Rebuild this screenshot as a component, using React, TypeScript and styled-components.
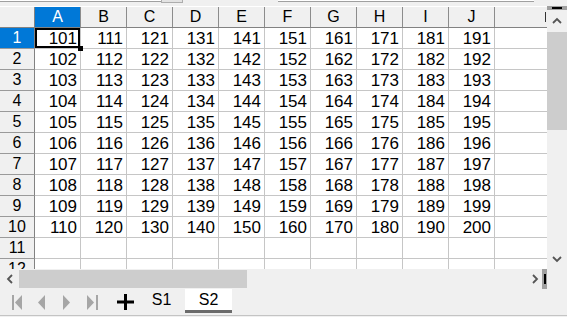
import React from "react";
import styled, { createGlobalStyle } from "styled-components";

const GlobalStyle = createGlobalStyle`
  html, body {
    margin: 0;
    padding: 0;
    background: #f0f0f0;
    font-family: "Liberation Sans", Arial, sans-serif;
    overflow: hidden;
  }
`;

const COLS = ["A", "B", "C", "D", "E", "F", "G", "H", "I", "J"];
const ROWS = Array.from({ length: 12 }, (_, i) => i + 1);

const Page = styled.div`
  width: 567px;
  height: 317px;
  display: flex;
  flex-direction: column;
  background: #f0f0f0;
`;

const TopStrip = styled.div`
  height: 6px;
  display: flex;
  align-items: flex-start;
`;

const TopInput = styled.div<{ $w: number }>`
  width: ${(p) => p.$w}px;
  height: 1px;
  background: #fff;
  border-bottom: 1px solid #a0a0a0;
`;

const TopButton = styled.div`
  width: 20px;
  height: 2px;
  background: #e3e3e3;
  border: 1px solid #adadad;
  border-top: none;
`;

const Gap = styled.div<{ $w: number }>`
  width: ${(p) => p.$w}px;
  flex-shrink: 0;
`;

const Main = styled.div`
  display: flex;
  height: 263px;
`;

const Sheet = styled.div`
  flex: 1;
  display: flex;
  flex-direction: column;
  overflow: hidden;
  padding-top: 1px;
  background: #fff;
`;

const HeaderRow = styled.div`
  display: flex;
  height: 20px;
  flex-shrink: 0;
  background: #f0f0f0;
  border-bottom: 1px solid #828282;
`;

const Corner = styled.div`
  width: 34px;
  border-right: 1px solid #828282;
  flex-shrink: 0;
`;

const ColHeader = styled.div<{ $selected?: boolean }>`
  width: 45px;
  flex-shrink: 0;
  border-right: 1px solid #8c8c8c;
  display: flex;
  align-items: center;
  justify-content: center;
  font-size: 16px;
  color: ${(p) => (p.$selected ? "#fff" : "#000")};
  background: ${(p) => (p.$selected ? "#0078d7" : "transparent")};
`;

const HeaderRest = styled.div`
  flex: 1;
  display: flex;
  justify-content: flex-end;
  align-items: center;
`;

const Splitter = styled.div`
  width: 1px;
  height: 10px;
  background: #333;
  margin-right: 1px;
`;

const Row = styled.div`
  display: flex;
  height: 20px;
  flex-shrink: 0;
  border-bottom: 1px solid #c6c6c6;
`;

const RowHeader = styled.div<{ $selected?: boolean }>`
  width: 34px;
  flex-shrink: 0;
  border-right: 1px solid #828282;
  margin-bottom: -1px;
  border-bottom: 1px solid #9a9a9a;
  display: flex;
  align-items: center;
  justify-content: center;
  font-size: 16px;
  color: ${(p) => (p.$selected ? "#fff" : "#000")};
  background: ${(p) => (p.$selected ? "#0078d7" : "#f0f0f0")};
`;

const Cell = styled.div<{ $active?: boolean }>`
  position: relative;
  width: 46px;
  flex-shrink: 0;
  box-sizing: border-box;
  border-right: 1px solid #c6c6c6;
  display: flex;
  align-items: center;
  justify-content: flex-end;
  padding-right: 3px;
  padding-top: 1px;
  font-size: 17px;
  color: #000;
  box-shadow: ${(p) => (p.$active ? "inset 0 0 0 2px #000" : "none")};
`;

const FillHandle = styled.div`
  position: absolute;
  right: -3px;
  bottom: -3px;
  width: 5px;
  height: 5px;
  background: #000;
  z-index: 2;
`;

const CellRest = styled.div`
  flex: 1;
`;

const VScroll = styled.div`
  width: 20px;
  flex-shrink: 0;
  display: flex;
  flex-direction: column;
  align-items: center;
  background: #f0f0f0;
`;

const VSplit = styled.div`
  width: 20px;
  height: 4px;
  background: #a0a0a0;
  display: flex;
  align-items: center;
  justify-content: center;
`;

const VSplitLine = styled.div`
  width: 10px;
  height: 2px;
  background: #000;
`;

const ArrowBox = styled.div<{ $w: number; $h: number }>`
  width: ${(p) => p.$w}px;
  height: ${(p) => p.$h}px;
  display: flex;
  align-items: center;
  justify-content: center;
  flex-shrink: 0;
`;

const VThumb = styled.div`
  width: 20px;
  height: 98px;
  background: #cdcdcd;
`;

const VTrack = styled.div`
  flex: 1;
`;

const HScroll = styled.div`
  height: 20px;
  display: flex;
  align-items: center;
`;

const HThumb = styled.div`
  width: 228px;
  height: 18px;
  background: #cdcdcd;
`;

const HTrack = styled.div`
  flex: 1;
`;

const HSplit = styled.div`
  width: 5px;
  height: 20px;
  background: #a0a0a0;
  display: flex;
  justify-content: center;
  align-items: center;
`;

const HSplitLine = styled.div`
  width: 2px;
  height: 10px;
  background: #000;
`;

const TabBar = styled.div`
  height: 26px;
  display: flex;
  align-items: stretch;
  border-bottom: 1px solid #c4c4c4;
`;

const NavGroup = styled.div`
  display: flex;
  align-items: center;
  padding-left: 12px;
`;

const NavButton = styled.div`
  width: 25px;
  height: 26px;
  display: flex;
  align-items: center;
  justify-content: flex-start;
`;

const AddButton = styled.div`
  width: 26px;
  display: flex;
  align-items: center;
  justify-content: center;
`;

const Tab = styled.div<{ $active?: boolean }>`
  width: 47px;
  display: flex;
  align-items: center;
  justify-content: center;
  font-size: 16px;
  color: #000;
  box-sizing: border-box;
  padding-top: 1px;
  margin-bottom: 2px;
  background: ${(p) => (p.$active ? "#fff" : "transparent")};
  border-bottom: 3px solid ${(p) => (p.$active ? "#6b6b6b" : "transparent")};
`;

const Chevron = ({ dir }: { dir: "up" | "down" | "left" | "right" }) => {
  const d = {
    up: "M1 6 L5 2 L9 6",
    down: "M1 2 L5 6 L9 2",
    left: "M6 1 L2 5 L6 9",
    right: "M2 1 L6 5 L2 9",
  }[dir];
  const vertical = dir === "up" || dir === "down";
  return (
    <svg width={vertical ? 10 : 8} height={vertical ? 8 : 10} viewBox={vertical ? "0 0 10 8" : "0 0 8 10"}>
      <path d={d} fill="none" stroke="#555" strokeWidth="1.8" />
    </svg>
  );
};

const NavIcon = ({ kind }: { kind: "first" | "prev" | "next" | "last" }) => (
  <svg width="12" height="15" viewBox="0 0 12 15">
    {kind === "first" && (
      <>
        <rect x="0" y="0" width="2" height="15" fill="#a6a6a6" />
        <path d="M10 0 L3 7.5 L10 15 Z" fill="#a6a6a6" />
      </>
    )}
    {kind === "prev" && <path d="M8 0 L1 7.5 L8 15 Z" fill="#a6a6a6" />}
    {kind === "next" && <path d="M1 0 L8 7.5 L1 15 Z" fill="#a6a6a6" />}
    {kind === "last" && (
      <>
        <path d="M0 0 L7 7.5 L0 15 Z" fill="#a6a6a6" />
        <rect x="9" y="0" width="2" height="15" fill="#a6a6a6" />
      </>
    )}
  </svg>
);

export default function App() {
  return (
    <Page>
      <GlobalStyle />
      <TopStrip>
        <TopInput $w={161} />
        <TopButton />
        <Gap $w={95} />
        <TopInput $w={256} />
      </TopStrip>
      <Main>
        <Sheet>
          <HeaderRow>
            <Corner />
            {COLS.map((c, i) => (
              <ColHeader key={c} $selected={i === 0}>
                {c}
              </ColHeader>
            ))}
            <HeaderRest>
              <Splitter />
            </HeaderRest>
          </HeaderRow>
          {ROWS.map((r) => (
            <Row key={r}>
              <RowHeader $selected={r === 1}>{r}</RowHeader>
              {COLS.map((c, ci) => (
                <Cell key={c} $active={r === 1 && ci === 0}>
                  {r <= 10 ? 100 + ci * 10 + r : ""}
                  {r === 1 && ci === 0 && <FillHandle />}
                </Cell>
              ))}
              <CellRest />
            </Row>
          ))}
        </Sheet>
        <VScroll>
          <VSplit>
            <VSplitLine />
          </VSplit>
          <ArrowBox $w={20} $h={22}>
            <Chevron dir="up" />
          </ArrowBox>
          <VThumb />
          <VTrack />
          <ArrowBox $w={20} $h={20}>
            <Chevron dir="down" />
          </ArrowBox>
        </VScroll>
      </Main>
      <HScroll>
        <ArrowBox $w={19} $h={20}>
          <Chevron dir="left" />
        </ArrowBox>
        <HThumb />
        <HTrack />
        <ArrowBox $w={14} $h={20}>
          <Chevron dir="right" />
        </ArrowBox>
        <HSplit>
          <HSplitLine />
        </HSplit>
        <Gap $w={20} />
      </HScroll>
      <TabBar>
        <NavGroup>
          <NavButton>
            <NavIcon kind="first" />
          </NavButton>
          <NavButton>
            <NavIcon kind="prev" />
          </NavButton>
          <NavButton>
            <NavIcon kind="next" />
          </NavButton>
          <NavButton>
            <NavIcon kind="last" />
          </NavButton>
        </NavGroup>
        <AddButton>
          <svg width="17" height="16" viewBox="0 0 17 16">
            <rect x="0" y="6.5" width="17" height="3" fill="#000" />
            <rect x="7" y="0" width="3" height="16" fill="#000" />
          </svg>
        </AddButton>
        <Tab>S1</Tab>
        <Tab $active>S2</Tab>
      </TabBar>
    </Page>
  );
}
